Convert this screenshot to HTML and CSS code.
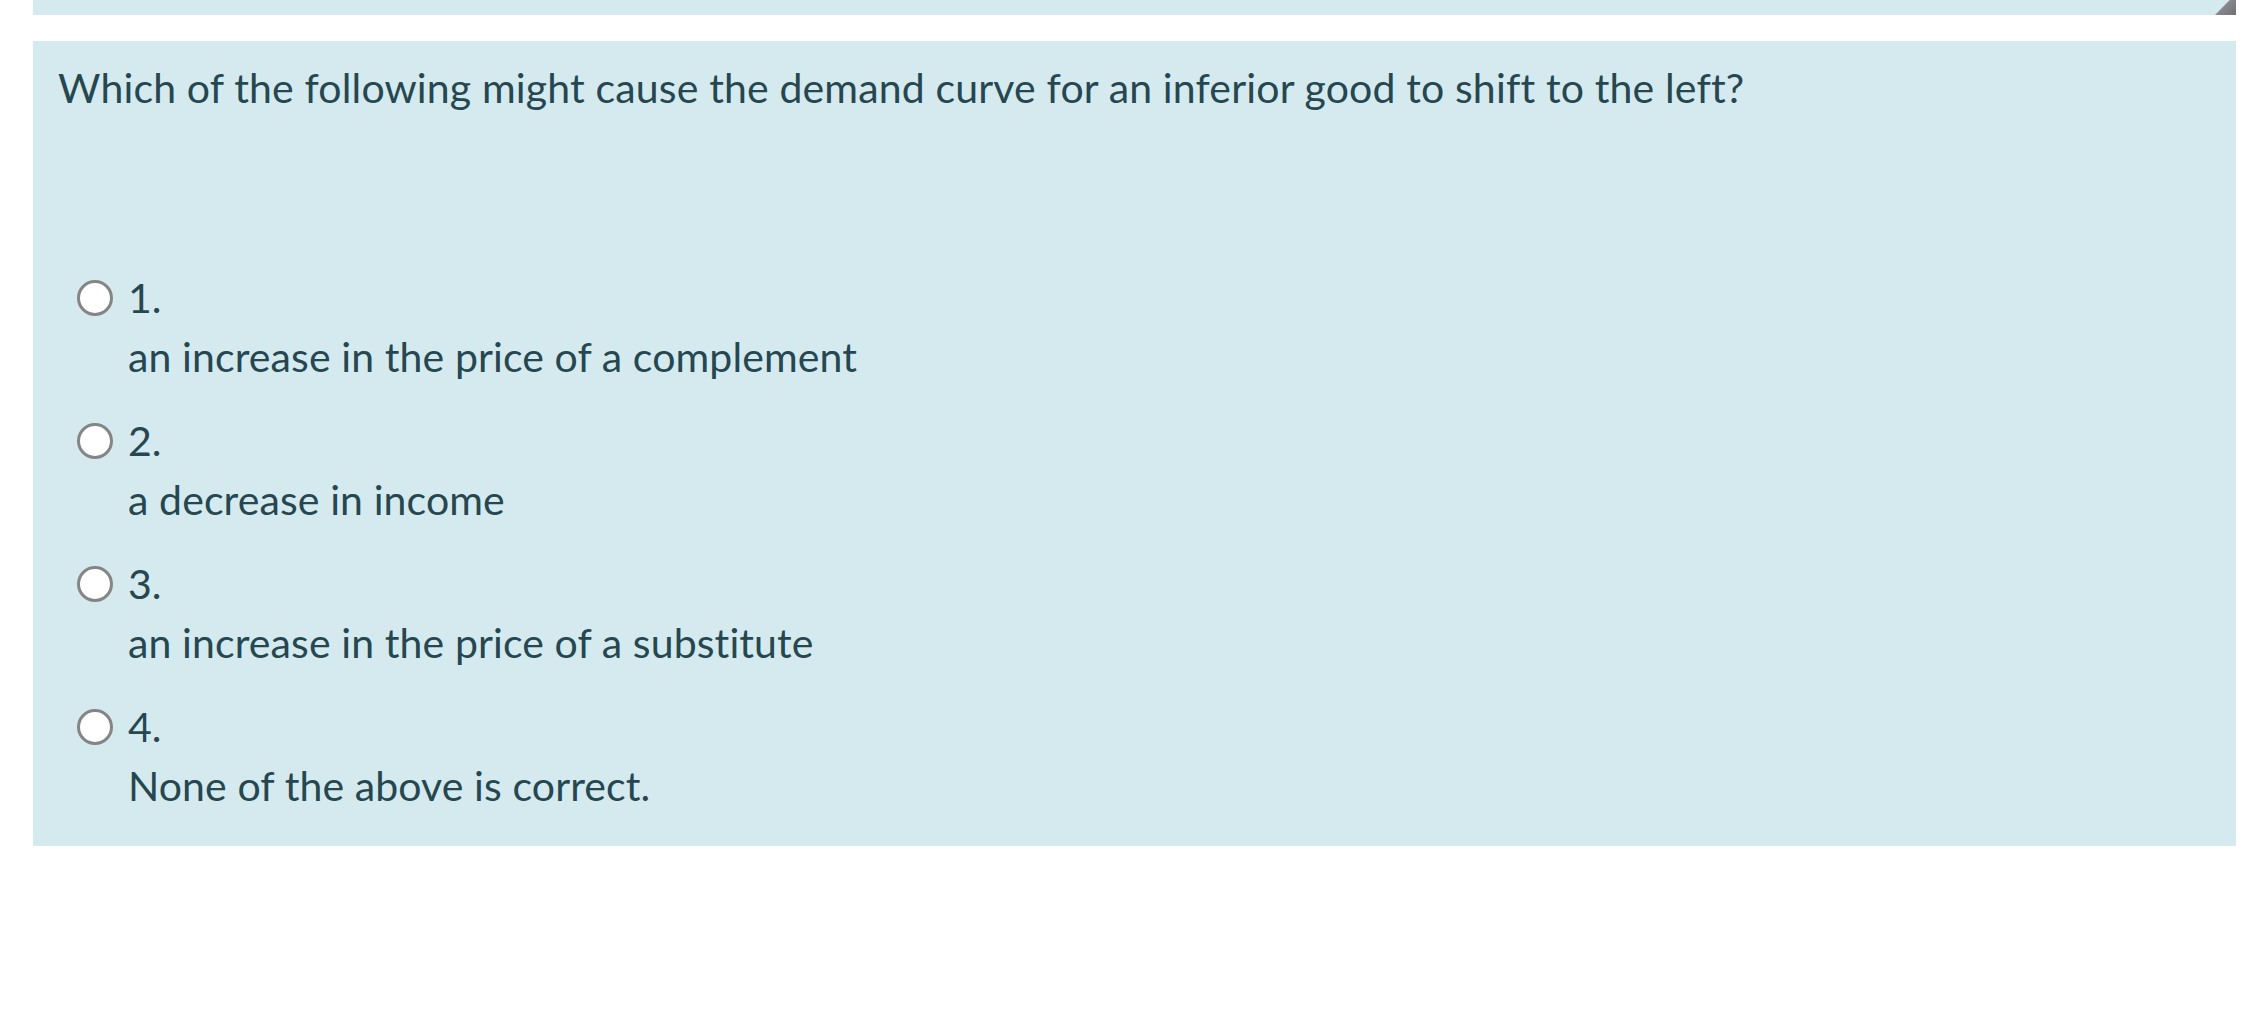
FILE: index.html
```html
<!DOCTYPE html>
<html lang="en">
<head>
<meta charset="utf-8">
<title>Question</title>
<link rel="stylesheet" href="styles.css">
</head>
<body>
<div class="page">
  <div class="topbar"><span class="grip"></span></div>
  <div class="que">
    <div class="qtext">Which of the following might cause the demand curve for an inferior good to shift to the left?</div>
    <div class="answers">
      <div class="opt">
        <div class="optrow"><span class="radio"></span><span class="num">1.</span></div>
        <div class="opttext">an increase in the price of a complement</div>
      </div>
      <div class="opt">
        <div class="optrow"><span class="radio"></span><span class="num">2.</span></div>
        <div class="opttext">a decrease in income</div>
      </div>
      <div class="opt">
        <div class="optrow"><span class="radio"></span><span class="num">3.</span></div>
        <div class="opttext">an increase in the price of a substitute</div>
      </div>
      <div class="opt">
        <div class="optrow"><span class="radio"></span><span class="num">4.</span></div>
        <div class="opttext">None of the above is correct.</div>
      </div>
    </div>
  </div>
</div>
</body>
</html>
```
FILE: styles.css
```css
html, body {
  margin: 0;
  padding: 0;
  background: #ffffff;
}
.page {
  padding: 0 25px 0 33px;
  font-family: Lato, "Liberation Sans", sans-serif;
  color: #26474f;
}
.topbar {
  position: relative;
  height: 15px;
  background: #d4eaef;
}
.grip {
  position: absolute;
  right: 0;
  bottom: 0;
  width: 21px;
  height: 15px;
  background: linear-gradient(135deg, #9a9aa0, #6f6f75);
  clip-path: polygon(70% 0, 100% 0, 100% 100%, 0 100%);
}
.que {
  margin-top: 26px;
  background: #d4eaef;
  padding: 17px 25px 31px 25px;
}
.qtext {
  font-size: 41px;
  line-height: 59px;
  letter-spacing: 0.15px;
}
.answers {
  margin-top: 151px;
  display: flex;
  flex-direction: column;
  gap: 25px;
}
.opt {
  font-size: 41px;
  line-height: 59px;
  padding-left: 70px;
}
.opttext {
  letter-spacing: 0.1px;
}
.optrow {
  display: flex;
  align-items: center;
  margin-left: -51px;
}
.radio {
  box-sizing: border-box;
  width: 36px;
  height: 36px;
  border-radius: 50%;
  border: 3px solid #858585;
  background: #ffffff;
  margin-right: 15px;
}
```
